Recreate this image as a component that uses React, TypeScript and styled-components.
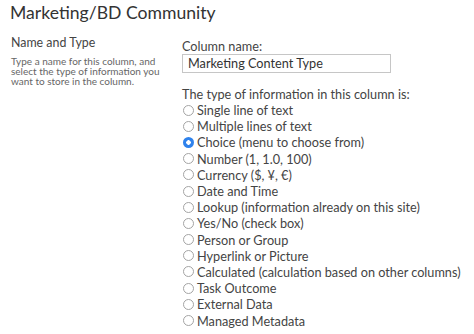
import React from "react";
import styled, { createGlobalStyle } from "styled-components";

const GlobalStyle = createGlobalStyle`
  body {
    margin: 0;
    background: #fff;
    font-family: "Lato", "Liberation Sans", sans-serif;
    color: #333;
  }
`;

const Page = styled.div`
  width: 474px;
  height: 334px;
  overflow: hidden;
  padding: 0 0 0 10px;
  box-sizing: border-box;
`;

const Title = styled.h1`
  margin: 0;
  padding-top: 1px;
  font-size: 17.6px;
  font-weight: 400;
  line-height: 24px;
  color: #333;
`;

const Section = styled.div`
  display: flex;
  margin-top: 6px;
`;

const Info = styled.div`
  width: 172px;
  flex: none;
`;

const InfoTitle = styled.div`
  font-size: 12.4px;
  line-height: 16px;
  color: #444;
  padding: 4px 0 0 1px;
`;

const InfoText = styled.p`
  margin: 5px 0 0 1px;
  font-size: 10px;
  line-height: 10px;
  color: #666;
  width: 160px;
`;

const Fields = styled.div`
  display: flex;
  flex-direction: column;
`;

const Label = styled.div<{ $top?: number }>`
  font-size: 12.7px;
  line-height: 16px;
  color: #444;
  padding-top: ${(p) => p.$top ?? 0}px;
`;

const TextInput = styled.div`
  width: 209px;
  height: 19px;
  box-sizing: border-box;
  border: 1px solid #c6c6c6;
  padding: 0 5px;
  font-size: 12.7px;
  line-height: 17px;
  color: #333;
`;

const Options = styled.div`
  display: flex;
  flex-direction: column;
`;

const Option = styled.div`
  display: flex;
  align-items: center;
  height: 16.2px;
  font-size: 12.7px;
  color: #444;
  white-space: nowrap;
`;

const Radio = styled.span<{ $checked?: boolean }>`
  width: 11px;
  height: 11px;
  box-sizing: border-box;
  border-radius: 50%;
  margin: 0 3px 0 1px;
  flex: none;
  border: ${(p) => (p.$checked ? "none" : "1px solid #a4a4a4")};
  background: ${(p) =>
    p.$checked ? "radial-gradient(circle, #fff 0 2px, #2f82ec 2.5px)" : "#fff"};
`;

const types = [
  "Single line of text",
  "Multiple lines of text",
  "Choice (menu to choose from)",
  "Number (1, 1.0, 100)",
  "Currency ($, ¥, €)",
  "Date and Time",
  "Lookup (information already on this site)",
  "Yes/No (check box)",
  "Person or Group",
  "Hyperlink or Picture",
  "Calculated (calculation based on other columns)",
  "Task Outcome",
  "External Data",
  "Managed Metadata",
];

export default function App() {
  return (
    <Page>
      <GlobalStyle />
      <Title>Marketing/BD Community</Title>
      <Section>
        <Info>
          <InfoTitle>Name and Type</InfoTitle>
          <InfoText>
            Type a name for this column, and select the type of information you
            want to store in the column.
          </InfoText>
        </Info>
        <Fields>
          <Label $top={7}>Column name:</Label>
          <TextInput>Marketing Content Type</TextInput>
          <Label $top={13}>The type of information in this column is:</Label>
          <Options>
            {types.map((t) => (
              <Option key={t}>
                <Radio $checked={t.startsWith("Choice")} />
                {t}
              </Option>
            ))}
          </Options>
        </Fields>
      </Section>
    </Page>
  );
}
